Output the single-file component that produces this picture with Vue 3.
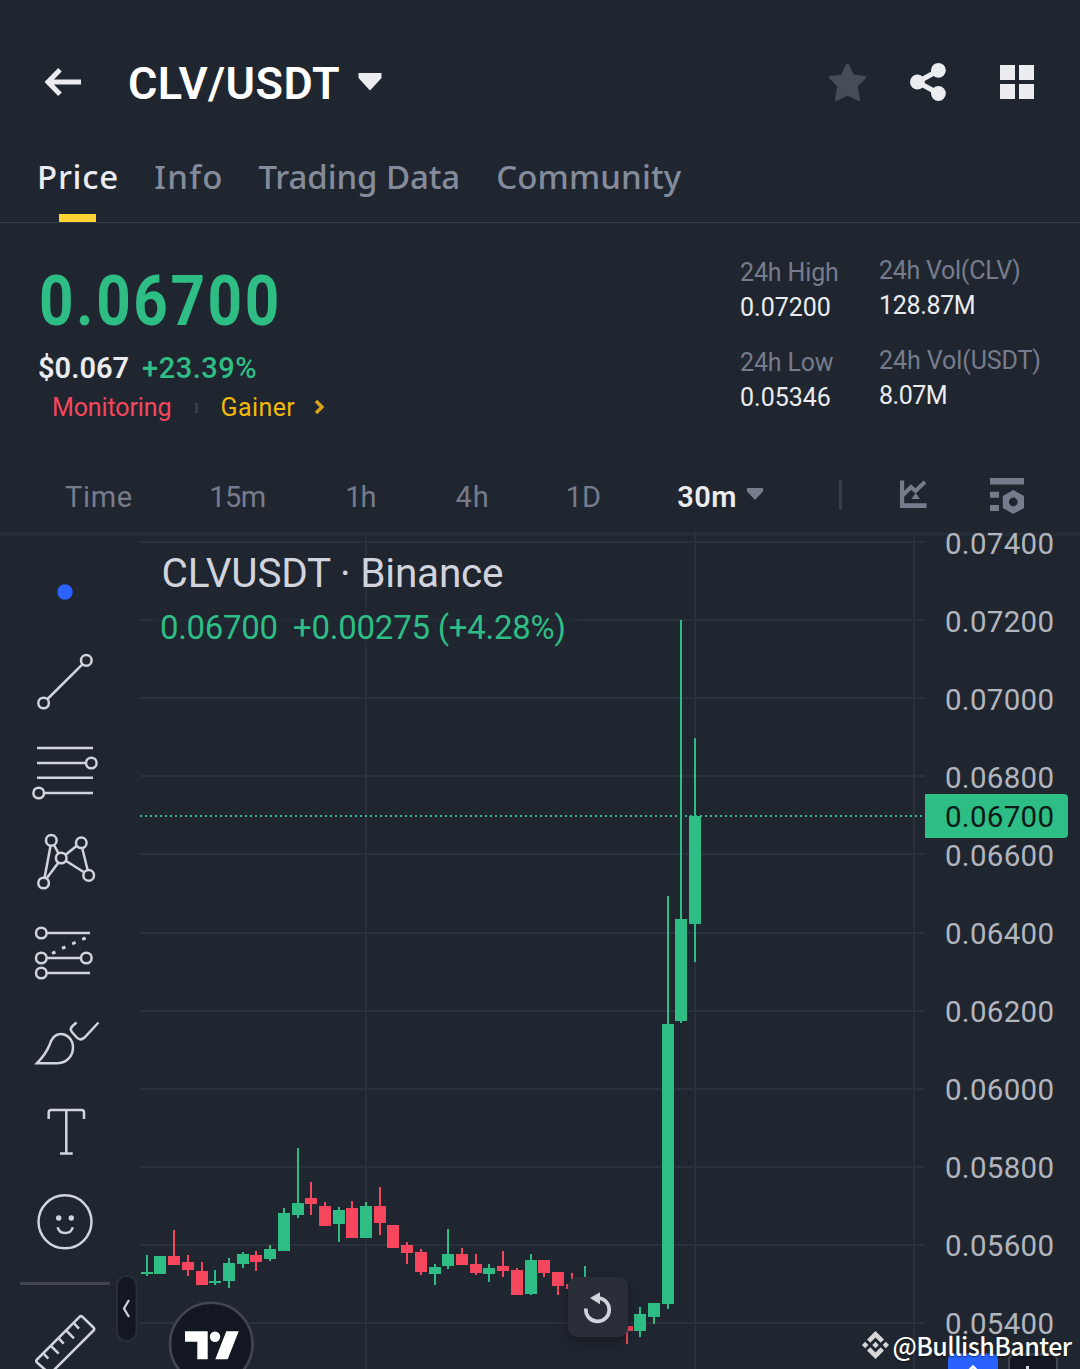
<script setup>
import { ref } from 'vue'

const tabs = [
  { label: 'Price', width: 81 },
  { label: 'Info', width: 68 },
  { label: 'Trading Data', width: 202 },
  { label: 'Community', width: 185 },
]
const activeTab = ref('Price')

const stats = [
  [
    { label: '24h High', lw: 99, value: '0.07200', vw: 91 },
    { label: '24h Low', lw: 94, value: '0.05346', vw: 91 },
  ],
  [
    { label: '24h Vol(CLV)', lw: 142, value: '128.87M', vw: 97 },
    { label: '24h Vol(USDT)', lw: 162, value: '8.07M', vw: 69 },
  ],
]

const intervals = [
  { label: 'Time', width: 67 },
  { label: '15m', width: 57 },
  { label: '1h', width: 31 },
  { label: '4h', width: 33 },
  { label: '1D', width: 35 },
]

const priceLabels = [
  '0.07400', '0.07200', '0.07000', '0.06800', '0.06600', '0.06400',
  '0.06200', '0.06000', '0.05800', '0.05600', '0.05400',
]
const gridX = [366, 695, 914]
const gridY = (i) => 542 + i * 78.1

// [x, high, bodyTop, bodyBottom, low, up]
const candles = [
  [147, 1255, 1272, 1274, 1276, 1],
  [160, 1256, 1256, 1274, 1274, 1],
  [174, 1230, 1256, 1265, 1265, 0],
  [188, 1255, 1262, 1270, 1276, 0],
  [202, 1262, 1271, 1285, 1285, 0],
  [215, 1270, 1281, 1283, 1285, 1],
  [229, 1258, 1263, 1281, 1288, 1],
  [243, 1252, 1254, 1264, 1268, 1],
  [256, 1251, 1255, 1262, 1271, 0],
  [270, 1245, 1249, 1259, 1261, 1],
  [284, 1208, 1213, 1251, 1251, 1],
  [298, 1148, 1203, 1215, 1218, 1],
  [311, 1182, 1198, 1204, 1215, 0],
  [325, 1202, 1206, 1226, 1226, 0],
  [339, 1207, 1210, 1224, 1242, 1],
  [352, 1201, 1208, 1238, 1238, 0],
  [366, 1202, 1206, 1238, 1238, 1],
  [380, 1187, 1206, 1223, 1235, 0],
  [393, 1225, 1225, 1248, 1248, 0],
  [407, 1242, 1245, 1253, 1264, 0],
  [421, 1249, 1252, 1272, 1275, 0],
  [435, 1264, 1267, 1274, 1285, 1],
  [448, 1229, 1254, 1266, 1269, 1],
  [462, 1248, 1254, 1265, 1265, 0],
  [476, 1254, 1264, 1273, 1275, 0],
  [489, 1264, 1268, 1274, 1282, 1],
  [503, 1251, 1266, 1271, 1277, 0],
  [517, 1268, 1270, 1295, 1295, 0],
  [531, 1254, 1260, 1294, 1295, 1],
  [544, 1260, 1260, 1273, 1277, 0],
  [558, 1272, 1272, 1286, 1295, 0],
  [572, 1273, 1284, 1289, 1290, 0],
  [585, 1266, 1284, 1300, 1300, 1],
  [627, 1320, 1326, 1331, 1344, 0],
  [640, 1307, 1314, 1331, 1337, 1],
  [654, 1303, 1303, 1317, 1324, 1],
  [668, 896, 1024, 1304, 1309, 1],
  [681, 620, 919, 1021, 1023, 1],
  [695, 738, 816, 924, 962, 1],
]

// spreads the letters so the label fills the given width
const vFit = {
  mounted(el, { value }) {
    const n = el.textContent.length
    const gap = (value - el.offsetWidth) / (n - 1)
    el.style.letterSpacing = `${gap}px`
    el.style.marginRight = `${-gap}px`
  },
}
</script>

<template>
  <main class="app">
    <header class="top">
      <svg class="top__back" width="38" height="28" viewBox="0 0 38 28">
        <path d="M37 14H4M16 1.8L4 14L16 26.2" fill="none" stroke="#eaecef" stroke-width="5" />
      </svg>
      <h1 class="top__pair"><span v-fit="212">CLV/USDT</span></h1>
      <svg class="top__caret" width="24" height="18" viewBox="0 0 24 18">
        <path d="M.5 0H23.5V5L12 17.5L.5 5Z" fill="#eaecef" />
      </svg>
      <div class="top__icons">
        <svg width="38" height="40" viewBox="0 0 38 40">
          <path
            d="M19.5 3L24.8 14L36.5 15.5L28.1 24L30.5 37.5L19.5 32L8.5 37.5L10.9 24L2.5 15.5L14.2 14Z"
            fill="#474d57" stroke="#474d57" stroke-width="3" stroke-linejoin="round"
          />
        </svg>
        <svg width="38" height="40" viewBox="0 0 38 40">
          <path d="M29.5 8.5L8.5 20L29.5 31.5" fill="none" stroke="#eaecef" stroke-width="5" />
          <circle cx="29.4" cy="8.3" r="7.4" fill="#eaecef" />
          <circle cx="8.4" cy="20" r="7.4" fill="#eaecef" />
          <circle cx="29.4" cy="31.5" r="7.4" fill="#eaecef" />
        </svg>
        <svg width="34" height="34" viewBox="0 0 34 34">
          <path d="M0 0H15V15H0ZM19 0H34V15H19ZM0 19H15V34H0ZM19 19H34V34H19Z" fill="#eaecef" />
        </svg>
      </div>
    </header>

    <nav class="tabs">
      <button
        v-for="tab in tabs"
        :key="tab.label"
        type="button"
        class="tab"
        :class="{ on: activeTab === tab.label }"
        @click="activeTab = tab.label"
      >
        <span v-fit="tab.width">{{ tab.label }}</span>
      </button>
    </nav>

    <section class="summary">
      <div class="quote">
        <div class="quote__price"><span v-fit="279">0.06700</span></div>
        <div class="quote__sub">
          <span v-fit="91" class="quote__usd">$0.067</span>
          <span v-fit="114" class="quote__pct">+23.39%</span>
        </div>
        <div class="quote__tags">
          <span v-fit="120" class="tag-red">Monitoring</span>
          <i class="quote__sep"></i>
          <span v-fit="74" class="tag-gold">Gainer</span>
          <svg width="11" height="16" viewBox="0 0 11 16">
            <path d="M2 2L8 8L2 14" fill="none" stroke="#d9a41b" stroke-width="3.4" />
          </svg>
        </div>
      </div>
      <div v-for="(col, c) in stats" :key="c" class="stats" :class="'stats--' + c">
        <div v-for="s in col" :key="s.label" class="stat">
          <div class="stat__k"><span v-fit="s.lw">{{ s.label }}</span></div>
          <div class="stat__v"><span v-fit="s.vw">{{ s.value }}</span></div>
        </div>
      </div>
    </section>

    <div class="intervals">
      <div v-for="(it, i) in intervals" :key="it.label" class="interval" :class="'interval--' + i">
        <span v-fit="it.width">{{ it.label }}</span>
      </div>
      <div class="interval on"><span v-fit="59">30m</span></div>
      <svg class="intervals__caret" width="16" height="12" viewBox="0 0 16 12">
        <path d="M0 0H16V3.5L8 12L0 3.5Z" fill="#767c8b" />
      </svg>
      <i class="intervals__sep"></i>
      <svg class="intervals__chart" width="27" height="28" viewBox="0 0 27 28">
        <path d="M0 .5H4.2V23.3H26.5V28H0Z" fill="#767c8b" />
        <path d="M3 15L11 7L15.5 11L25 2" fill="none" stroke="#767c8b" stroke-width="4" />
        <path d="M15.7 13L20 19H11.5Z" fill="#767c8b" />
      </svg>
      <svg class="intervals__set" width="35" height="36" viewBox="0 0 35 36">
        <path d="M0 0H34V6.5H0ZM0 13.8H9V19.8H0ZM0 27H9V33H0Z" fill="#767c8b" />
        <path
          d="M23.3 12L34 18V30L23.3 36L12.8 30V18ZM23.3 19.6A4.4 4.4 0 1 0 23.3 28.4A4.4 4.4 0 1 0 23.3 19.6Z"
          fill="#767c8b" fill-rule="evenodd"
        />
      </svg>
    </div>

    <section class="board">
      <aside class="tools">
        <svg class="tool" viewBox="0 0 90 90"><circle cx="45" cy="45" r="7.7" fill="#2962ff" stroke="none" /></svg>
        <svg class="tool" viewBox="0 0 90 90">
          <path d="M27.5 62L62.4 27.3" />
          <circle cx="23.6" cy="66" r="5.3" />
          <circle cx="66.3" cy="23.4" r="5.3" />
        </svg>
        <svg class="tool" viewBox="0 0 90 90">
          <path d="M17 21H73M17 36H66M17 50.8H73M24 66H73" />
          <circle cx="71.3" cy="36" r="5.3" />
          <circle cx="18.7" cy="66" r="5.3" />
        </svg>
        <svg class="tool" viewBox="0 0 90 90">
          <path d="M30.6 28.5L24.6 60.6M26.7 61.3L38.5 45.5M34 28L38.6 36.4M45.6 37.8L56.8 28.8M45.8 43.8L64 55.3M62.2 31L67.7 53.2" />
          <circle cx="31.3" cy="23.4" r="5.3" />
          <circle cx="61.3" cy="25.8" r="5.3" />
          <circle cx="41.2" cy="41" r="5.3" />
          <circle cx="68.7" cy="58.4" r="5.3" />
          <circle cx="23.6" cy="66" r="5.3" />
        </svg>
        <svg class="tool" viewBox="0 0 90 90">
          <path d="M27 26H70M27 51H61M27 66H70" />
          <path d="M32 46.4L35.4 45M42 41.4L45.4 40M52.2 36.8L55.6 35.4M62.2 32.4L65.6 31" stroke-width="3" />
          <circle cx="21.3" cy="26" r="5.3" />
          <circle cx="21.3" cy="51" r="5.3" />
          <circle cx="66.3" cy="51" r="5.3" />
          <circle cx="21.3" cy="66" r="5.3" />
        </svg>
        <svg class="tool" viewBox="0 0 90 90">
          <path d="M17 66.2C24 59 27.5 53 29.3 48.5C31.5 41.5 35 37 40.5 37C47.7 37 53 43 53 50.5C53 59.5 46 66.2 38 66.2Z" />
          <path d="M56.5 25.5L52.5 29C50.4 31 50.4 33.5 52.3 35.5L56.8 40.5C59 42.8 62 42.8 64.5 40.5L78.5 25.5" />
        </svg>
        <svg class="tool" viewBox="0 0 90 90">
          <path d="M28.7 32V25.5Q28.7 23 31.2 23H61.5Q64 23 64 25.5V32M46.3 23V66.5M40 66.5H52.7" />
        </svg>
        <svg class="tool" viewBox="0 0 90 90">
          <circle cx="45" cy="44.8" r="26.5" />
          <circle class="eye" cx="38.7" cy="41" r="2.7" />
          <circle class="eye" cx="51.3" cy="41" r="2.7" />
          <path d="M37.6 50.3C39.5 58 50.8 58 52.8 50.3" />
        </svg>
        <i class="tools__line"></i>
        <svg class="tool" viewBox="0 0 90 90">
          <path d="M17 62.5L59.5 19.8Q61 18.3 62.5 19.8L73.5 30.5Q75 32 73.5 33.5L30 77L17 65.5Q15.5 64 17 62.5Z" />
          <path d="M23.3 56.3L28.3 61.7M31 49L38.7 56.7M38.7 41.3L43.7 46.7M46.3 33.7L54 41.3M54 26.3L59 31.7" />
        </svg>
      </aside>

      <svg class="chart" width="970" height="837" viewBox="110 532 970 837">
        <g stroke="#2b313c" stroke-width="2">
          <path v-for="(p, i) in priceLabels" :key="p" :d="`M140 ${Math.round(gridY(i))}H925`" />
          <path v-for="x in gridX" :key="x" :d="`M${x} 532V1369`" />
        </g>
        <rect x="152" y="606" width="426" height="41" fill="#202630" opacity="0.6" />
        <path d="M140 816H925" stroke="#2ebd85" stroke-width="2" stroke-dasharray="2 3" />

        <g v-for="c in candles" :key="c[0]" :fill="c[5] ? '#2ebd85' : '#f6465d'">
          <rect :x="c[0] - 1" :y="c[1]" width="2" :height="c[4] - c[1]" />
          <rect :x="c[0] - 6" :y="c[2]" width="12" :height="c[3] - c[2]" />
        </g>

        <text x="161.5" y="587" class="legend" textLength="342">CLVUSDT · Binance</text>
        <text x="160" y="639" class="legend-val" textLength="118">0.06700</text>
        <text x="293" y="639" class="legend-val" textLength="273">+0.00275 (+4.28%)</text>

        <text
          v-for="(p, i) in priceLabels"
          :key="'l' + p"
          x="945"
          :y="gridY(i) + 11.6 - i * 0.05"
          class="axis"
          textLength="109"
        >{{ p }}</text>
        <path d="M925 794H1064Q1068 794 1068 798V834Q1068 838 1064 838H925Z" fill="#2ebd85" />
        <text x="945" y="827" class="axis axis--now" textLength="109">0.06700</text>

        <rect x="117" y="1276" width="19.5" height="65" rx="9.5" fill="#131722" stroke="#2a2e39" stroke-width="2" />
        <path d="M129 1300L124 1308.5L129 1317" fill="none" stroke="#d1d4dc" stroke-width="2.2" />

        <circle cx="211.3" cy="1344" r="41.3" fill="#131722" stroke="#434651" stroke-width="2.6" />
        <path d="M185 1331.3H207.7V1359.3H197.3V1341.7H185ZM226.3 1331.3H238.7L227.7 1359.3H215.3Z" fill="#fff" />
        <circle cx="215" cy="1336.7" r="5.2" fill="#fff" />

        <rect class="reset" x="568" y="1277" width="60" height="60" rx="9" />
        <path d="M585.9 1308.5A11.7 11.7 0 1 0 597.5 1298" fill="none" stroke="#d1d4dc" stroke-width="3.6" />
        <path d="M590 1298L600 1292.3V1304.3Z" fill="#d1d4dc" />

        <rect x="948" y="1353.5" width="50" height="30" rx="6" fill="#2962ff" />
        <path d="M969.5 1370L973 1366.5L976.5 1370" fill="none" stroke="#fff" stroke-width="2.5" />
        <rect x="1009" y="1354.5" width="48" height="30" rx="6" fill="#131722" stroke="#434651" stroke-width="2" />
        <path d="M1027.5 1366V1372" stroke="#d1d4dc" stroke-width="3" />
      </svg>
    </section>

    <div class="mark">
      <svg width="27" height="28" viewBox="0 0 27 28">
        <path
          d="M13.5 0L22 8.5L18.7 11.8L13.5 6.6L8.3 11.8L5 8.5ZM13.5 28L22 19.5L18.7 16.2L13.5 21.4L8.3 16.2L5 19.5ZM13.5 10.7L16.8 14L13.5 17.3L10.2 14ZM3.2 10.8L6.4 14L3.2 17.2L0 14ZM23.8 10.8L27 14L23.8 17.2L20.6 14Z"
          fill="#d6d6d6"
        />
      </svg>
      <span v-fit="180">@BullishBanter</span>
    </div>
  </main>
</template>

<style>
body {
  margin: 0;
  background: #202630;
}
</style>

<style scoped>
.app {
  position: relative;
  width: 1080px;
  height: 1369px;
  overflow: hidden;
  background: #202630;
  color: #eaecef;
  font-family: Roboto, 'Noto Sans', sans-serif;
}

.app svg {
  display: block;
  flex: none;
}

.app span {
  display: inline-block;
  white-space: nowrap;
}

.top {
  box-sizing: border-box;
  height: 132px;
  padding: 34px 46px 0 44px;
  display: flex;
  align-items: center;
}

.top__back {
  margin-top: -2px;
}

.top__pair {
  margin: 2px 0 0 46px;
  font-size: 45px;
  font-weight: 600;
  line-height: 60px;
  color: #fff;
}

.top__caret {
  margin: -2px 0 0 18px;
}

.top__icons {
  display: flex;
  align-items: center;
  margin: -2px 0 0 auto;
}

.top__icons svg + svg {
  margin-left: 43px;
}

.top__icons svg + svg + svg {
  margin-left: 53px;
}

.tabs {
  display: flex;
  gap: 36px;
  height: 90px;
  padding-left: 37px;
  border-bottom: 1px solid #333b47;
}

.tab {
  position: relative;
  padding: 0;
  border: 0;
  background: none;
  font-family: 'Noto Sans', Roboto, sans-serif;
  font-size: 33px;
  font-weight: 500;
  line-height: 88px;
  color: #848b9b;
}

.tab.on {
  color: #eaecef;
}

.tab.on::after {
  content: '';
  position: absolute;
  left: 22px;
  bottom: 0;
  width: 37px;
  height: 8px;
  background: #fcd535;
}

.summary {
  box-sizing: border-box;
  display: flex;
  height: 239px;
  padding-left: 38px;
}

.quote {
  width: 702px;
  padding-top: 38px;
}

.quote__price {
  height: 80px;
  padding-left: 1px;
  font-size: 70px;
  font-weight: 700;
  line-height: 80px;
  color: #2ebd85;
}

.quote__price span {
  transform: scaleX(0.86);
  transform-origin: left;
}

.quote__sub {
  display: flex;
  gap: 13px;
  margin-top: 7px;
  font-size: 29px;
  font-weight: 500;
  line-height: 40px;
}

.quote__usd {
  font-weight: 600;
}

.quote__pct {
  color: #2ebd85;
}

.quote__tags {
  display: flex;
  align-items: center;
  padding-left: 14px;
  font-size: 25px;
  line-height: 40px;
}

.tag-red {
  color: #f6465d;
}

.tag-gold {
  color: #f0b90b;
}

.quote__sep {
  width: 3px;
  height: 10px;
  margin: 0 23px;
  background: #373e4a;
}

.quote__tags svg {
  margin-left: 19px;
  margin-top: -2px;
}

.stats {
  width: 139px;
  padding-top: 32px;
  font-size: 25px;
  line-height: 35px;
}

.stats--1 {
  width: 180px;
  padding-top: 30px;
}

.stat + .stat {
  margin-top: 20px;
}

.stat__k {
  color: #767c8b;
}

.intervals {
  display: flex;
  align-items: center;
  height: 70px;
  padding-left: 65px;
  font-size: 29px;
  color: #767c8b;
}

.interval--1 {
  margin-left: 77px;
}

.interval--2 {
  margin-left: 79px;
}

.interval--3 {
  margin-left: 79px;
}

.interval--4 {
  margin-left: 77px;
}

.interval.on {
  margin-left: 76px;
  font-weight: 600;
  color: #eaecef;
}

.intervals__caret {
  margin: -6px 0 0 11px;
}

.intervals__sep {
  width: 3px;
  height: 30px;
  margin: -4px 0 0 76px;
  background: #373e4a;
}

.intervals__chart {
  margin: -6px 0 0 58px;
}

.intervals__set {
  margin: -3px 0 0 63px;
}

.board {
  display: flex;
  height: 837px;
  background: linear-gradient(#262c37, #262c37) top / 100% 4px no-repeat;
}

.app .chart {
  overflow: visible;
}

.tools {
  width: 90px;
  padding: 15px 0 0 20px;
}

.tool {
  width: 90px;
  height: 90px;
  fill: none;
  stroke: #d1d4dc;
  stroke-width: 2.5;
}

.eye {
  fill: #d1d4dc;
  stroke: none;
}

.tools__line {
  display: block;
  width: 90px;
  height: 3px;
  margin: 14.5px 0 12.5px;
  background: #434651;
}

.legend {
  font-size: 40.5px;
  fill: #d1d4dc;
}

.legend-val {
  font-size: 33px;
  fill: #2ebd85;
}

.axis {
  font-size: 29.5px;
  fill: #b2b5be;
}

.axis--now {
  fill: #0c1a18;
}

.reset {
  fill: #2a2e39;
  filter: drop-shadow(0 4px 6px rgba(0, 0, 0, 0.35));
}

.mark {
  position: absolute;
  right: 8px;
  bottom: 5px;
  display: flex;
  align-items: center;
  gap: 3px;
  font-family: 'Noto Sans CJK SC', 'Noto Sans', sans-serif;
  font-size: 25px;
  font-weight: 500;
  line-height: 38px;
  color: #fff;
  text-shadow: 0 1px 2px rgba(0, 0, 0, 0.5);
}
</style>
